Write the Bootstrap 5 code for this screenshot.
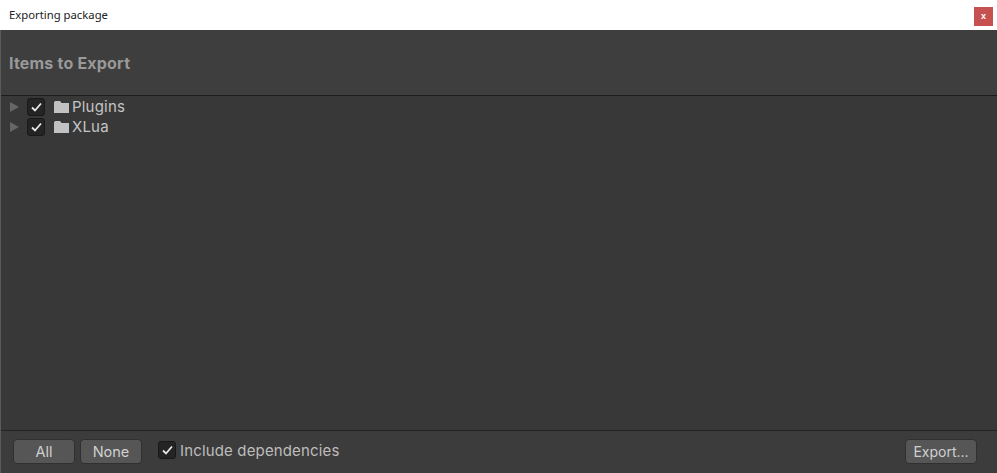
<!DOCTYPE html>
<html lang="en">
<head>
<meta charset="utf-8">
<title>Exporting package</title>
<link href="https://cdn.jsdelivr.net/npm/bootstrap@5.3.0/dist/css/bootstrap.min.css" rel="stylesheet">
<style>
html,body{height:473px;overflow:hidden;background:#383838}
.win{height:473px;border-left:1px solid #5a5a5a;font-family:Inter,"Liberation Sans",sans-serif}
.titlebar{height:30px;margin-left:-1px;background:#fff;color:#222;font:11.3px/30px "Noto Sans",sans-serif;padding-left:9px}
.closer{width:19px;height:19px;margin:7px 4px 0 0;background:#c75050;color:#fff;font:700 9px/19px "Liberation Sans",sans-serif;text-align:center}
.head{height:66px;background:#3e3e3e;border-bottom:1px solid #1c1c1c;color:#999;font-size:16px;font-weight:700;line-height:66px;padding-left:8px;letter-spacing:.2px}
.tree{background:#383838;padding-top:1px;color:#c4c4c4;font-size:15px}
.trow{height:20px;line-height:20px;letter-spacing:.2px}
.arrow{width:0;height:0;border-left:9px solid #666;border-top:5px solid transparent;border-bottom:5px solid transparent;margin:0 8px 0 9px}
.chk{width:18px;height:18px;background:#242424;border:1px solid #191919;border-radius:3px;flex:none}
.folder{margin:0 3px 0 9px;flex:none}
.foot{height:43px;background:#3c3c3c;border-top:1px solid #242424;padding:0 20px 0 12px;color:#bdbdbd;font-size:15px}
.ubtn{--bs-btn-bg:#565656;--bs-btn-color:#d0d0d0;--bs-btn-border-color:#303030;--bs-btn-hover-bg:#565656;--bs-btn-hover-color:#d0d0d0;--bs-btn-hover-border-color:#303030;height:25px;padding:0;font-size:14.5px;line-height:23px;border-radius:4px;margin-top:-2px}
.w62{width:62px}.w72{width:72px}
.gapn{margin-left:5px;margin-right:16px}
.fchk{margin-top:-5px}
.lbl{letter-spacing:.15px;margin-top:-1px;margin-left:4px}
.expo{font-size:14px}
</style>
</head>
<body>
<div class="win d-flex flex-column">
  <div class="titlebar d-flex justify-content-between flex-shrink-0">
    <span>Exporting package</span>
    <div class="closer">x</div>
  </div>
  <div class="head flex-shrink-0">Items to Export</div>
  <div class="tree flex-grow-1">
    <div class="trow d-flex align-items-center">
      <span class="arrow"></span>
      <span class="chk d-flex align-items-center justify-content-center"><svg width="11" height="10" viewBox="0 0 11 10"><path d="M1 5.5 4 8.5 10 1.5" fill="none" stroke="#e8e8e8" stroke-width="1.8"/></svg></span>
      <svg class="folder" width="15" height="12" viewBox="0 0 15 12"><path d="M0 1.5 1 0H6L7.500 2H15V12H0Z" fill="#c2c2c2"/></svg>
      <span>Plugins</span>
    </div>
    <div class="trow d-flex align-items-center">
      <span class="arrow"></span>
      <span class="chk d-flex align-items-center justify-content-center"><svg width="11" height="10" viewBox="0 0 11 10"><path d="M1 5.5 4 8.5 10 1.5" fill="none" stroke="#e8e8e8" stroke-width="1.8"/></svg></span>
      <svg class="folder" width="15" height="12" viewBox="0 0 15 12"><path d="M0 1.5 1 0H6L7.500 2H15V12H0Z" fill="#c2c2c2"/></svg>
      <span>XLua</span>
    </div>
  </div>
  <div class="foot d-flex align-items-center flex-shrink-0">
    <button type="button" class="btn ubtn w62">All</button>
    <button type="button" class="btn ubtn w62 gapn">None</button>
    <span class="chk d-flex align-items-center justify-content-center fchk"><svg width="11" height="10" viewBox="0 0 11 10"><path d="M1 5.5 4 8.500 10 1.500" fill="none" stroke="#e8e8e8" stroke-width="1.8"/></svg></span>
    <span class="lbl">Include dependencies</span>
    <button type="button" class="btn ubtn w72 ms-auto expo">Export...</button>
  </div>
</div>
<script src="https://cdn.jsdelivr.net/npm/bootstrap@5.3.0/dist/js/bootstrap.bundle.min.js"></script>
</body>
</html>
